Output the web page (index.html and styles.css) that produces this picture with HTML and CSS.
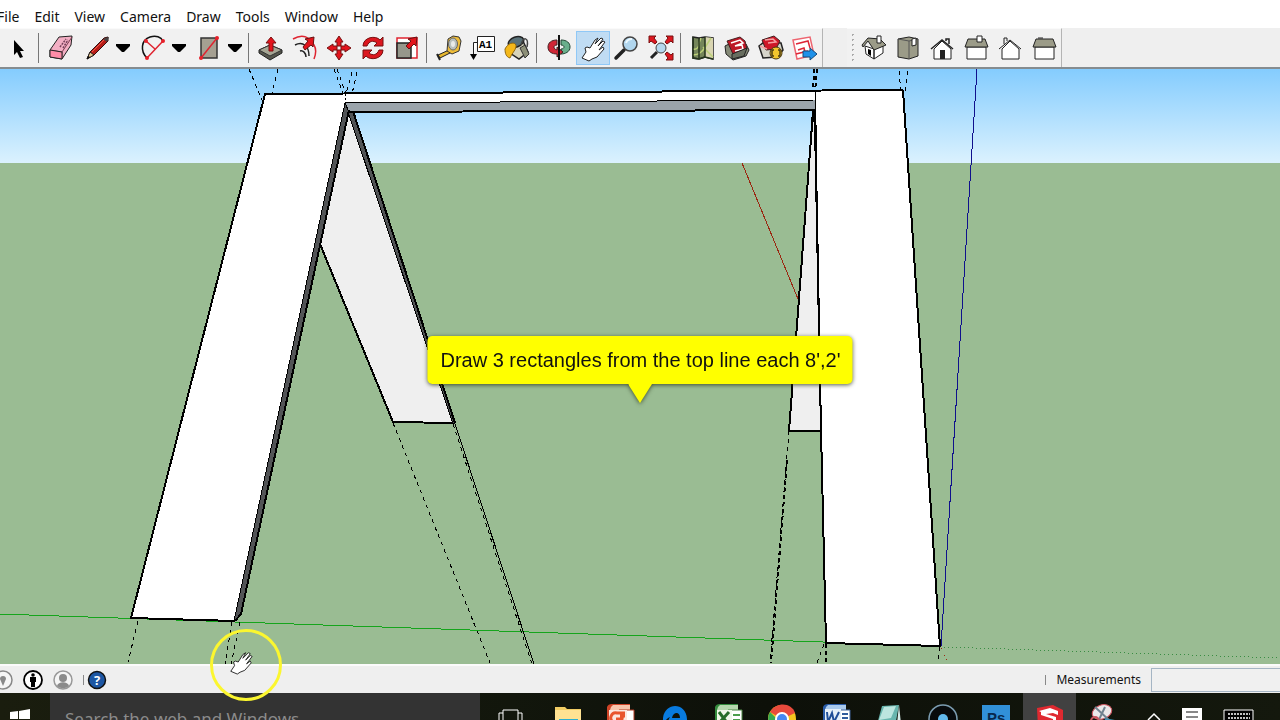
FILE: index.html
```html
<!DOCTYPE html>
<html lang="en">
<head>
<meta charset="utf-8">
<title>3D modeling workspace</title>
<link rel="stylesheet" href="styles.css">
</head>
<body>
<div class="app">
  <nav class="menubar" aria-label="Main menu">
    <button>File</button><button>Edit</button><button>View</button><button>Camera</button><button>Draw</button><button>Tools</button><button>Window</button><button>Help</button>
  </nav>

  <header class="toolbars">
    <div class="toolbar" role="toolbar" aria-label="Tools">
      <button class="tool" aria-label="Select"><svg viewBox="0 0 28 28"><path d="M9 6v15l3-3 3 6 3-1-3-6h4z" fill="#000"/></svg></button>
      <span class="sep"></span>
      <button class="tool" aria-label="Eraser"><svg viewBox="0 0 28 28"><path d="M3 16 12 3l13-1-1 9-9 14-12-2z" fill="#f3afc4" stroke="#222"/><path d="m3 16 12 2L25 3M15 18v7" fill="none" stroke="#7c3c50"/><path d="m3 16 12 2v7L3 23z" fill="#ff8da8" stroke="#222"/><path d="m13 13 6-8m-3 9 5-8" stroke="#76405a" stroke-width="1.5" stroke-dasharray="2 1"/></svg></button>
      <div class="split"><button class="tool" aria-label="Line"><svg viewBox="0 0 28 28"><path d="m3 25 3-7L20 4l4-1v4L10 21z" fill="#b81c18" stroke="#301010"/><path d="m3 25 3-7 4 3z" fill="#e4c48c" stroke="#222"/><path d="m3 25 1-3 2 1z"/><path d="m8 18 13-13" stroke="#f05a4a"/><path d="m19 5 4 3 2-5z" fill="#444"/></svg></button><button class="caret" aria-label="More line tools"><svg viewBox="0 0 14 8"><path d="M0 0h14v2L8 8H6L0 2z"/></svg></button></div>
      <div class="split"><button class="tool" aria-label="Arc"><svg viewBox="0 0 28 28" fill="none"><path d="M7 24C0 17 1 6 10 3c6-2 11 0 13 4" stroke="#111" stroke-width="1.5"/><path d="M7 24 23 7M6 7l9 8" stroke="#df2430" stroke-width="1.5"/><g fill="#e6212a"><circle cx="7" cy="24" r="2"/><circle cx="23" cy="7" r="2"/><circle cx="6" cy="7" r="2"/></g></svg></button><button class="caret" aria-label="More arc tools"><svg viewBox="0 0 14 8"><path d="M0 0h14v2L8 8H6L0 2z"/></svg></button></div>
      <div class="split"><button class="tool" aria-label="Rectangle"><svg viewBox="0 0 28 28"><path d="M5 4h16v20H5z" fill="#a5a092" stroke="#333" stroke-width="1.5"/><path d="M5 24 21 4" stroke="#df2430" stroke-width="1.5"/><g fill="#e6212a"><circle cx="5" cy="24" r="2"/><circle cx="21" cy="4" r="2"/></g></svg></button><button class="caret" aria-label="More shape tools"><svg viewBox="0 0 14 8"><path d="M0 0h14v2L8 8H6L0 2z"/></svg></button></div>
      <span class="sep"></span>
      <button class="tool" aria-label="Push/Pull"><svg viewBox="0 0 28 28"><path d="m2 16 11-5 12 5v3l-12 7L2 19z" fill="#55564c" stroke="#222"/><path d="m2 16 11-5 12 5-12 6z" fill="#a5a694" stroke="#333"/><path d="M12 17V9H9l5-6 5 6h-3v8z" fill="#e3141c" stroke="#711"/></svg></button>
      <button class="tool" aria-label="Offset"><svg viewBox="0 0 28 28" fill="none"><path d="M2 5c9-5 16-3 21 6 3 5 2 9 0 14" stroke="#df2430" stroke-width="1.5"/><path d="M4 11c8-4 14 1 14 11M9 17c3-1 6 2 6 6" stroke="#222" stroke-width="1.5"/><path d="m12 13 5-6-3-2 9-2-1 10-2-2-6 5z" fill="#e3141c" stroke="#611"/></svg></button>
      <button class="tool" aria-label="Move"><svg viewBox="0 0 28 28"><path id="move-arrow" d="m14 2 4 6h-2v4h-4V8h-2z" fill="#e3141c" stroke="#711"/><use href="#move-arrow" transform="rotate(90 14 14)"/><use href="#move-arrow" transform="rotate(180 14 14)"/><use href="#move-arrow" transform="rotate(270 14 14)"/></svg></button>
      <button class="tool" aria-label="Rotate"><svg viewBox="0 0 28 28"><path d="M4 12C4 3 17 1 21 6l3-3v9h-9l3-3c-4-3-8-2-10 3z" fill="#dc171f" stroke="#711"/><path d="M24 16c0 9-13 11-17 6l-3 3v-9h9l-3 3c4 3 8 2 10-3z" fill="#dc171f" stroke="#711"/></svg></button>
      <button class="tool" aria-label="Scale"><svg viewBox="0 0 28 28"><path d="M4 4h20v20H4z" fill="#fff" stroke="#df2430" stroke-width="1.5"/><path d="M4 9h14v15H4z" fill="#96978b" stroke="#222" stroke-width="1.5"/><path d="m13 12 5-5-3-2 9-2-1 9-2-2-5 5z" fill="#e3141c" stroke="#611"/></svg></button>
      <span class="sep"></span>
      <button class="tool" aria-label="Tape Measure"><svg viewBox="0 0 28 28"><path d="m3 21 11-5 3 2-12 6z" fill="#e6b72e" stroke="#222"/><path d="m2 20 3 6" stroke="#222" stroke-width="2"/><path d="m13 5 5-3 6 1 2 4-2 10-7 3-5-3z" fill="#efbd38" stroke="#333"/><ellipse cx="18" cy="10" rx="4.5" ry="6" fill="#b9c0bd" stroke="#666"/><ellipse cx="18" cy="10" rx="2" ry="3" fill="#e9ebe9"/></svg></button>
      <button class="tool" aria-label="Text"><svg viewBox="0 0 28 28"><path d="M8.500 2.500h17v15h-17zM8 8.500H4.500V22" fill="#fff" stroke="#222"/><path d="M1 20h7l-3.500 6z"/><text x="10" y="14" class="label-glyph">A1</text></svg></button>
      <button class="tool" aria-label="Paint Bucket"><svg viewBox="0 0 28 28"><path d="m7 9 12-4 6 13-9 7-9-6z" fill="#d6d3bb" stroke="#222" stroke-width="1.5"/><ellipse cx="13" cy="8" rx="8" ry="5" transform="rotate(-20 13 8)" fill="#597178" stroke="#222" stroke-width="1.5"/><path d="m17 14 5 10 4-4-4-9z" fill="#8d9078" stroke="#333"/><path d="M18 11c2-9 8-8 6 2" fill="none" stroke="#444" stroke-width="1.5"/><path d="M2 15c4-8 12-7 11-2-1 4-4 6-6 11-4-1-5-5-5-9z" fill="#f4b81a" stroke="#8e6710"/></svg></button>
      <span class="sep"></span>
      <button class="tool" aria-label="Orbit"><svg viewBox="0 0 28 28"><path d="M16 6c6 0 9 3 9 7 0 5-5 7-9 7v-5c4 0 4-4 0-4z" fill="#69af8c" stroke="#243"/><path d="M12 6c-6 0-9 3-9 7 0 5 4 7 9 7v3l6-5-6-5v3c-4-1-4-5 0-5z" fill="#cf2636" stroke="#422"/><path d="M14 1v25" stroke="#111" stroke-width="2"/></svg></button>
      <button class="tool active" aria-label="Pan" aria-pressed="true"><svg viewBox="0 0 28 28"><path id="hand" d="m3 24 4-6-1-4 2-1 3 1 5-8 3-2-3 6 6-6 2 1-5 7 5-5 2 1-6 8 4-3 1 2-7 8-5 2-3 2z" fill="#fff" stroke="#222" stroke-linejoin="round"/></svg></button>
      <button class="tool" aria-label="Zoom"><svg viewBox="0 0 28 28"><path d="m11 16-8 8" stroke="#222" stroke-width="3.500" stroke-linecap="round"/><circle cx="17" cy="10" r="7" fill="#b1d6ee" stroke="#444" stroke-width="1.5"/><path d="M13 9c1-3 3-4 6-4" stroke="#eefaff" fill="none" stroke-width="2"/></svg></button>
      <button class="tool" aria-label="Zoom Extents"><svg viewBox="0 0 28 28"><path d="m10 18-6 6" stroke="#222" stroke-width="3"/><path id="corner-arrow" d="M2 2h7L7 4l3 4-2 2-4-3-2 2z" fill="#dc171f" stroke="#711"/><use href="#corner-arrow" transform="rotate(90 14 14)"/><use href="#corner-arrow" transform="rotate(180 14 14)"/><circle cx="14" cy="14" r="5" fill="#b5d8ee" stroke="#444"/></svg></button>
      <span class="sep"></span>
      <button class="tool" aria-label="Add Location"><svg viewBox="0 0 28 28"><path d="m4 3 6 1 6-1 8 1v21l-8-2-6 2-6-1z" fill="#75865a" stroke="#222" stroke-width="1.5"/><path d="m16 3 8 1v21l-8-2z" fill="#d9d5b2"/><path d="M4 15c4 1 6-2 6-6l2-5M4 21c6 0 9-3 13-9l5-8M14 13l10 10" stroke="#bcd178" stroke-width="1.5" fill="none"/><path d="M10 4v21M16 3v20M4 3v21l6 1 6-2 8 2" fill="none" stroke="#26351e" stroke-width="1.5"/></svg></button>
      <button class="tool" aria-label="3D Warehouse"><svg viewBox="0 0 28 28"><path d="m2 12 4-2 3 6 10-1 4-5 3 6-3 6-13 4-7-6z" fill="#858a77" stroke="#222"/><path d="m4 7 13-4 5 4 2 8-14 5z" fill="#bd1727" stroke="#422"/><path d="m8 9 9-3 3 3-8 3 7-1 1 4-8 2" fill="none" stroke="#fff" stroke-width="1.5"/><path d="m9 20 15-6-3 8-12 3z" fill="#686e60" stroke="#222"/></svg></button>
      <button class="tool" aria-label="Extension Warehouse"><svg viewBox="0 0 28 28"><path d="m2 12 5-4 17 1 2 7-6 7-14 1z" fill="#d5d4ca" stroke="#222" stroke-width="1.5"/><path d="m5 6 12-4 6 5-4 8-10 1z" fill="#ce1727" stroke="#422"/><path d="m8 6 8-1 3 3-8 1M3 12l7 3" stroke="#f5a1a2" stroke-width="1.5" fill="none"/><circle cx="19" cy="19" r="6" fill="#f3c62d" stroke="#443510"/><path d="M17 16h-2v6h2m4-6h2v6h-2" stroke="#4b3c12" stroke-width="1.5" fill="none"/></svg></button>
      <button class="tool" aria-label="Send to LayOut"><svg viewBox="0 0 28 28"><path d="m2 6 17-3 4 18-17 4z" fill="#fff" stroke="#ed6570" stroke-width="1.5"/><path d="m5 10 12-3 2 7m-12 2 6-2 2 8M5 20l12-3" stroke="#dd2637" stroke-width="1.5" fill="none"/><path d="M12 17h7v-3l7 6-7 6v-3h-7z" fill="#1f91e9" stroke="#154a7a"/></svg></button>
    </div>
    <div class="toolbar views" role="toolbar" aria-label="Views">
      <span class="grip"></span>
      <button class="tool" aria-label="Iso"><svg viewBox="0 0 28 28"><path d="m5 12 9 3v10l-8-5zM14 15l9-3v7l-9 6z" fill="#fff" stroke="#222"/><path d="m2 11 6-7 12 1 6 6-12 5-6-9-5 6z" fill="#9b9b88" stroke="#222"/><path d="M17 2h4v7h-4z" fill="#fff" stroke="#222"/><path d="m8 15 3 1v6l-3-2z"/></svg></button>
      <button class="tool" aria-label="Top"><svg viewBox="0 0 28 28"><path d="m4 5 11-2 9 2v17l-9 3-11-2z" fill="#9b9b88" stroke="#222"/><path d="M15 7v18M4 5l11 2 9-2" stroke="#555" fill="none"/><path d="m18 5 4-1v7l-4 1z" fill="#fff" stroke="#222"/></svg></button>
      <button class="tool" aria-label="Front"><svg viewBox="0 0 28 28"><path d="M6 15v10h17V15l-9-8z" fill="#fff" stroke="#222"/><path d="m3 15 11-9 11 9M18 7V5h3v5" fill="none" stroke="#222" stroke-width="1.5"/><path d="M12 16h5v9h-5z" fill="#222"/></svg></button>
      <button class="tool" aria-label="Right"><svg viewBox="0 0 28 28"><path d="M5 13h19v12H5z" fill="#fff" stroke="#222"/><path d="M6 5h17l3 8H3z" fill="#9b9b88" stroke="#222"/><path d="M15 2h5v6h-5z" fill="#fff" stroke="#222"/></svg></button>
      <button class="tool" aria-label="Back"><svg viewBox="0 0 28 28"><path d="M6 15v10h17V15l-9-8z" fill="#fff" stroke="#222"/><path d="m3 15 11-9 11 9M8 10V4h3v3" fill="none" stroke="#222"/></svg></button>
      <button class="tool" aria-label="Left"><svg viewBox="0 0 28 28"><path d="M5 13h19v12H5z" fill="#fff" stroke="#222"/><path d="M6 5h17l3 8H3zM8 4h5" fill="#9b9b88" stroke="#222"/></svg></button>
    </div>
  </header>

  <main class="viewport">
    <svg class="scene" viewBox="0 69 1280 595" preserveAspectRatio="xMidYMin slice" role="img" aria-label="Swing frame model" shape-rendering="crispEdges">
      <defs><linearGradient id="sky" x2="0" y2="1"><stop stop-color="#84ccfe"/><stop offset="1" stop-color="#dcf2fe"/></linearGradient></defs>
      <path d="M0 69h1280v95H0z" fill="url(#sky)"/>
      <path d="M0 163h1280v501H0z" fill="#9abc93"/>
      <path d="m742 163 56 136" stroke="#9b2712"/>
      <path d="m977 69-36 577" stroke="#10108c"/>
      <path d="m0 614 940 32" stroke="#15a51c"/>
      <path d="m944 647 336 11" stroke="#3a8c43" stroke-dasharray="1 3"/>
      <path d="m941 648 7 14" stroke="#9b2712" stroke-dasharray="1 3"/>
      <g fill="none" stroke="#000" stroke-dasharray="4 4">
        <path d="m249 69 13 31m16-31-6 24m62-24 10 27m-7-27 9 25m6-22-6 22m11-22-5 22m547-23 2 21m7-21-3 21"/>
        <path d="m138 621-10 41m104-40-7 42m15-42-9 42M393 423l97 240M453 424l79 240M789 431l-19 232m54-19-7 19m123-16-2 15"/>
      </g>
      <path d="m814 69-1 23m4-23-2 23M826 644v19M787 460l-16 203" stroke="#000" stroke-width="2" stroke-dasharray="4 3"/>
      <path d="m455 424 79 240" stroke="#000"/>
      <path d="m348 111 105 312-60-1-73-178z" fill="#efefef"/>
      <path d="m453 423-60-1-73-178" stroke="#000" stroke-width="2" fill="none"/>
      <path d="m348 112 5-1 102 312-2 1z" fill="#525456" stroke="#000"/>
      <path d="m353 111 102 312" stroke="#000" stroke-width="2"/>
      <path d="m813 112-24 319h32l-6-306z" fill="#efefef" stroke="#000" stroke-width="2"/>
      <path d="M345 94 815 91v10l-470 2z" fill="#fff"/>
      <path d="m345 103 470-3v10l-467 2z" fill="#9ba4ab"/>
      <path d="m345 103 470-3" stroke="#000"/>
      <path d="m348 112 467-2" stroke="#000" stroke-width="2"/>
      <path d="m265 94 80-1v11L234 621l-103-3z" fill="#fff"/>
      <path d="m345 103 4 9-108 502-7 7z" fill="#525456" stroke="#000"/>
      <path d="m349 110-108 504-6 7" fill="none" stroke="#000" stroke-width="2"/>
      <path d="m815 91 88-1 37 556-114-3-5-213z" fill="#fff"/>
      <path d="m903 90 37 556-114-3-5-213-6-320" fill="none" stroke="#000" stroke-width="2"/>
      <path d="M815 110V92" stroke="#000"/>
      <path d="m813 110-2 28m4-28 1 28" stroke="#000" stroke-width="2"/>
      <path d="M235 621 131 618 265 94l638-4" fill="none" stroke="#000" stroke-width="2"/>
      <path d="m345 94 1 10" stroke="#000" stroke-dasharray="2 2"/>
    </svg>
    <div class="callout">Draw 3 rectangles from the top line each 8',2'</div>
  </main>

  <footer class="status">
    <button class="status-icon" aria-label="Geo-location"><svg viewBox="0 0 20 20"><circle cx="10" cy="10" r="9" fill="#f5f5f5" stroke="#888" stroke-width="1.5"/><path d="M10 16 7 9a3 3 0 1 1 6 0z" fill="#888"/></svg></button>
    <button class="status-icon" aria-label="Credits"><svg viewBox="0 0 20 20"><circle cx="10" cy="10" r="9" fill="#fff" stroke="#000" stroke-width="1.8"/><circle cx="10" cy="5" r="1.8"/><path d="M7 7h6v5h-1v5H8v-5H7z"/></svg></button>
    <button class="status-icon" aria-label="Sign in"><svg viewBox="0 0 20 20"><circle cx="10" cy="10" r="9" fill="#f5f5f5" stroke="#999" stroke-width="1.5"/><circle cx="10" cy="8" r="4" fill="#8b8b8b"/><path d="M4 16c1-5 11-5 12 0-4 3-8 3-12 0z" fill="#8b8b8b"/></svg></button>
    <span class="divider"></span>
    <button class="status-icon help" aria-label="Help"><svg viewBox="0 0 20 20"><circle cx="10" cy="10" r="8.5" fill="#1d57a4" stroke="#111" stroke-width="1.5"/><text x="7" y="15" class="help-glyph">?</text></svg></button>
    <span class="divider end"></span>
    <label for="measurements">Measurements</label>
    <input id="measurements" type="text">
  </footer>

  <div class="taskbar">
    <button class="start" aria-label="Start"><svg viewBox="0 0 32 32"><path d="m6 9 8-1v8H6zm9-1 11-2v10H15zM6 17h8v8l-8-1zm9 0h11v10l-11-2z" fill="#fff"/></svg></button>
    <input class="search" type="search" aria-label="Search" placeholder="Search the web and Windows">
    <button class="taskview" aria-label="Task View"><svg viewBox="0 0 32 32"><path d="M8 7h15v19H8zM8 10H4v13h4m15-13h4v13h-4" fill="none" stroke="#fff"/></svg></button>
    <div class="apps">
      <button aria-label="File Explorer"><svg viewBox="0 0 32 32"><path d="M3 4h10l2 2h14v22H3z" fill="#f2cd65"/><path d="M3 7h26v20H3z" fill="#ffe292"/><path d="M7 16h19v12H7z" fill="#2eafd0"/></svg></button>
      <button aria-label="PowerPoint"><svg viewBox="0 0 32 32"><path d="M2 4q1-3 5-3h18v28H2z" fill="#cf4427"/><path d="M8 2h17v5H5q0-3 3-5z" fill="#f8c5ac"/><path d="M14 7h15v21H14z" fill="#fff" stroke="#b13b23"/><path d="M4 7h18v20H4z" fill="#fbe8df"/><path d="M20 10h-8a5 5 0 0 0-4 9c3 3 8 2 9-3h-6m4-3h5" fill="none" stroke="#e9562d" stroke-width="3"/></svg></button>
      <button aria-label="Edge"><svg viewBox="0 0 32 32"><path d="M4 15C6-1 27-1 28 16v4H13c1 6 9 6 14 3v4C15 34 4 25 11 14c-3 1-5 4-7 8zm9 0h8c0-7-7-6-8 0z" fill="#087be0"/></svg></button>
      <button aria-label="Excel"><svg viewBox="0 0 32 32"><path d="M3 4q1-3 5-3h18v28H3z" fill="#348b3d"/><path d="M8 2h18v5H5q0-3 3-5z" fill="#b6d7ad"/><path d="M16 7h14v22H16z" fill="#fff" stroke="#4b8544"/><path d="M21 12h7m-7 5h7" stroke="#4b9d4b" stroke-width="2"/><path d="M5 7h15v19H5z" fill="#eff8e9"/><path d="m7 9 9 12M17 9 7 20" stroke="#256e28" stroke-width="3"/></svg></button>
      <button aria-label="Chrome"><svg viewBox="0 0 32 32"><circle cx="16" cy="16" r="14" fill="#f5c51f"/><path d="M16 16 4 9C11-2 26 0 29 10z" fill="#e84a3c"/><path d="M4 9C-1 18 5 28 15 30l4-10-7-3z" fill="#36a852"/><circle cx="16" cy="16" r="6" fill="#4789f3" stroke="#fff" stroke-width="2"/></svg></button>
      <button aria-label="Word"><svg viewBox="0 0 32 32"><path d="M3 4q1-3 5-3h18v28H3z" fill="#295ba7"/><path d="M8 2h18v5H5q0-3 3-5z" fill="#a9c9ec"/><path d="M18 7h12v22H18z" fill="#fff" stroke="#40659b"/><path d="M22 11h6m-6 4h6m-6 4h6" stroke="#315c9d" stroke-width="2"/><path d="M5 6h16v20H5z" fill="#e5eff9"/><path d="m7 9 1 10 4-9 2 9 5-10" fill="none" stroke="#1f4e98" stroke-width="2"/></svg></button>
      <button aria-label="Notes"><svg viewBox="0 0 32 32"><path d="m9 3 17-1-5 27H2z" fill="#68b5ae"/><path d="m11 4 12-1-5 12-12 2z" fill="#bce5df"/><path d="m26 2 2 19-5 9z" fill="#d8eeeb"/></svg></button>
      <button aria-label="Recorder"><svg viewBox="0 0 32 32"><circle cx="16" cy="16" r="14" fill="#080b0d" stroke="#7c9db2" stroke-width="1.5"/><circle cx="16" cy="16" r="5" fill="#61b9ed"/></svg></button>
      <button aria-label="Photoshop"><svg viewBox="0 0 32 32"><path d="M2 2h28v28H2z" fill="#3190d8"/><text x="7" y="20" class="ps-glyph">Ps</text></svg></button>
      <button class="current" aria-label="SketchUp"><svg viewBox="0 0 32 32"><path d="m3 5 16-3 10 5v19l-9 4-16-6z" fill="#df2930"/><path d="m5 8 11-3 8 3v4l-5-2-7 1 10 3v6h-3v-4L7 12v-3z" fill="#fff"/></svg></button>
      <button aria-label="Snipping Tool"><svg viewBox="0 0 32 32"><ellipse cx="15" cy="9" rx="10" ry="7" transform="rotate(-20 15 9)" fill="#ebe9ea" stroke="#cf5761"/><path d="m8 4 15 14M18 4 9 23" stroke="#718390" stroke-width="2"/><circle cx="8" cy="18" r="4" fill="none" stroke="#c95760" stroke-width="2"/><path d="m17 15 11 2-6 6z" fill="#408fb2"/></svg></button>
    </div>
    <div class="tray">
      <button class="tray-up" aria-label="Show hidden icons"><svg viewBox="0 0 32 32"><path d="m10 17 6-6 6 6" fill="none" stroke="#fff" stroke-width="1.5"/></svg></button>
      <button class="tray-note" aria-label="Notifications"><svg viewBox="0 0 26 32"><path d="M3 5h20v17H12l-4 4v-4H3z" fill="#fff"/><path d="M7 9h12M7 14h12" stroke="#111"/></svg></button>
      <button class="tray-keys" aria-label="Touch keyboard"><svg viewBox="0 0 32 32"><path d="M1 7h29v17H1z" fill="#000" stroke="#fff"/><path d="M5 11h22M5 15h22" stroke="#fff" stroke-width="1.5" stroke-dasharray="2 1"/></svg></button>
    </div>
  </div>

  <div class="pointer"><svg viewBox="0 0 28 28"><use href="#hand"/></svg></div>
</div>
</body>
</html>
```
FILE: styles.css
```css
* { box-sizing: border-box; }
body { margin: 0; font-family: "Noto Sans", "Open Sans", sans-serif; font-size: 14px; color: #111; }
button { display: flex; align-items: center; justify-content: center; flex: none; margin: 0; padding: 0; border: 0; background: none; font: inherit; color: inherit; }
svg { display: block; flex: none; }
.app { position: relative; display: flex; flex-direction: column; height: 100vh; overflow: hidden; }

.menubar { display: flex; gap: 15px; height: 28px; margin-left: -3px; padding-top: 4px; background: #fff; }

.toolbars { display: flex; gap: 24px; height: 41px; background: #efefef; border-bottom: 2px solid #858c90; }
.toolbar { display: flex; align-items: center; padding-left: 2px; border-top: 1px solid #fafafa; border-right: 1px solid #b4b4b4; background: #f1f1f1; }
.toolbar.views { padding-left: 1px; }
.tool { width: 34px; height: 34px; border: 1px solid transparent; }
.tool svg { width: 28px; height: 28px; }
.tool.active { background: #c0dcf3; border-color: #90c8f6; }
.split { display: flex; align-items: center; padding-left: 6px; }
.split .tool { width: 28px; }
.caret { width: 22px; height: 34px; }
.caret svg { width: 14px; height: 8px; }
.sep { width: 8px; height: 30px; background: linear-gradient(#777, #777) 2px 0 / 1px 100% no-repeat; }
.grip { width: 9px; height: 32px; background: radial-gradient(circle, #aaa 1px, transparent 1px) 2px 0 / 5px 5px repeat-y; }
.label-glyph { font: bold 11px "Liberation Mono", monospace; }

.viewport { position: relative; flex: 1; min-height: 0; background: #9abc93; }
.scene { width: 100%; height: 100%; }
.callout { position: absolute; top: 267px; left: 50%; padding: 0 12px 0 13px; transform: translateX(-50%); border-radius: 5px; background: #ff0; filter: drop-shadow(0 1px 2px rgba(40, 50, 20, .8)); color: #111; font: 20px/48px "Liberation Sans", Arial, sans-serif; white-space: nowrap; }
.callout::after { content: ""; position: absolute; top: 100%; left: 50%; width: 24px; height: 19px; margin-left: -12px; background: #ff0; clip-path: polygon(0 0, 100% 0, 50% 100%); }

.status { display: flex; align-items: center; height: 29px; border-top: 2px solid #fbfbfb; background: #efefef; }
.status-icon { width: 20px; height: 20px; margin-right: 10px; }
.status-icon:first-child { margin-left: -7px; }
.status-icon svg { width: 20px; height: 20px; }
.divider { width: 1px; height: 10px; margin-right: 3px; background: #888; }
.divider.end { margin: 0 10px 0 auto; }
.status label { margin-right: 10px; font-size: 12px; }
#measurements { width: 129px; height: 24px; border: 1px solid #a5b5c4; border-right: 0; background: #f0f0f0; }
.help-glyph { fill: #fff; font: bold 13px "Noto Sans", sans-serif; }

.taskbar { display: flex; align-items: flex-start; height: 27px; overflow: hidden; background: linear-gradient(90deg, #1a1d0e, #12160c 40%, #0d1009 60%, #14180d); }
.taskbar button, .taskbar .search { height: 52px; }
.taskbar svg { width: 32px; height: 32px; }
.start { width: 50px; padding-right: 10px; }
.search { width: 430px; margin: 0; padding: 0 15px 2px; border: 0; border-radius: 0; appearance: none; background: #333; color: #ddd; font: 17px "Noto Sans", sans-serif; }
.search::placeholder { color: #8b8b8b; opacity: 1; }
.taskview { width: 61px; }
.apps { display: flex; flex: 1; }
.apps button { flex: 1; }
.apps .current { background: #414141; }
.ps-glyph { fill: #08294d; font: bold 15px "Liberation Sans", sans-serif; }
.tray { display: flex; padding-right: 8px; }
.tray-up { width: 48px; }
.tray-note { width: 28px; }
.taskbar .tray-note svg { width: 26px; }
.tray-keys { width: 66px; }

.pointer { position: absolute; bottom: 19px; left: 210px; display: flex; align-items: center; justify-content: center; width: 72px; height: 72px; padding: 0 10px 6px 0; border: 3px solid #fbf62f; border-radius: 50%; pointer-events: none; }
.pointer svg { width: 26px; height: 26px; }
```
